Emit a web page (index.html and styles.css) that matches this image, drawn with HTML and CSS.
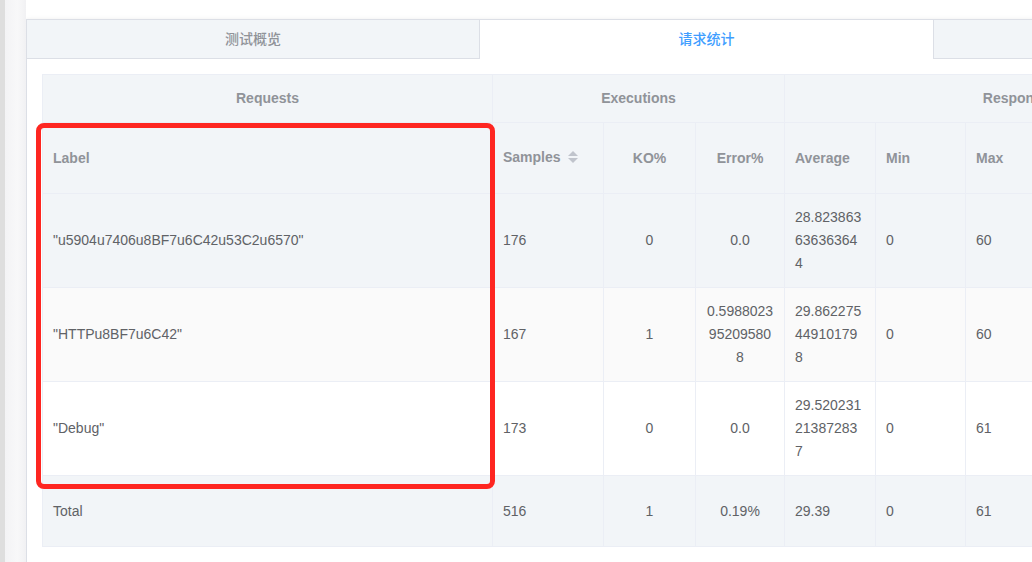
FILE: index.html
```html
<!DOCTYPE html>
<html lang="zh">
<head>
<meta charset="utf-8">
<title>请求统计</title>
<link rel="stylesheet" href="styles.css">
</head>
<body>
<div class="page">
  <div class="gutter"></div>
  <div class="side"></div>
  <div class="main">
    <div class="card">
      <div class="tabs">
        <div class="tab t1">测试概览</div>
        <div class="tab active">请求统计</div>
        <div class="tab t3">错误信息</div>
      </div>
      <div class="pane">
        <table class="stats">
          <colgroup>
            <col class="w-label">
            <col class="w-samples">
            <col class="w-ko">
            <col class="w-err">
            <col class="w-avg">
            <col class="w-90">
            <col class="w-90">
            <col class="w-90">
            <col class="w-90">
            <col class="w-90">
            <col class="w-100">
            <col class="w-100">
            <col class="w-100">
          </colgroup>
          <thead>
            <tr class="group">
              <th><div class="cell">Requests</div></th>
              <th colspan="3"><div class="cell">Executions</div></th>
              <th colspan="6"><div class="cell">Response Times (ms)</div></th>
              <th><div class="cell">Throughput</div></th>
              <th colspan="2"><div class="cell">Network (KB/sec)</div></th>
            </tr>
            <tr class="cols">
              <th><div class="cell">Label</div></th>
              <th><div class="cell">Samples<span class="caret-wrapper"><i class="sort-caret ascending"></i><i class="sort-caret descending"></i></span></div></th>
              <th class="c"><div class="cell">KO%</div></th>
              <th class="c"><div class="cell">Error%</div></th>
              <th><div class="cell">Average</div></th>
              <th><div class="cell">Min</div></th>
              <th><div class="cell">Max</div></th>
              <th><div class="cell">90th pct</div></th>
              <th><div class="cell">95th pct</div></th>
              <th><div class="cell">99th pct</div></th>
              <th><div class="cell">Transactions/s</div></th>
              <th><div class="cell">Received</div></th>
              <th><div class="cell">Sent</div></th>
            </tr>
          </thead>
          <tbody>
            <tr class="row-hl">
              <td><div class="cell">"u5904u7406u8BF7u6C42u53C2u6570"</div></td>
              <td><div class="cell">176</div></td>
              <td class="c"><div class="cell">0</div></td>
              <td class="c"><div class="cell">0.0</div></td>
              <td><div class="cell">28.823863636363644</div></td>
              <td><div class="cell">0</div></td>
              <td><div class="cell">60</div></td>
              <td><div class="cell">43.0</div></td>
              <td><div class="cell">50.0</div></td>
              <td><div class="cell">57.0</div></td>
              <td><div class="cell">2.93822</div></td>
              <td><div class="cell">1.23</div></td>
              <td><div class="cell">0.56</div></td>
            </tr>
            <tr class="row-stripe">
              <td><div class="cell">"HTTPu8BF7u6C42"</div></td>
              <td><div class="cell">167</div></td>
              <td class="c"><div class="cell">1</div></td>
              <td class="c"><div class="cell">0.5988023952095808</div></td>
              <td><div class="cell">29.862275449101798</div></td>
              <td><div class="cell">0</div></td>
              <td><div class="cell">60</div></td>
              <td><div class="cell">44.0</div></td>
              <td><div class="cell">51.0</div></td>
              <td><div class="cell">58.0</div></td>
              <td><div class="cell">2.78797</div></td>
              <td><div class="cell">1.17</div></td>
              <td><div class="cell">0.53</div></td>
            </tr>
            <tr class="row-plain">
              <td><div class="cell">"Debug"</div></td>
              <td><div class="cell">173</div></td>
              <td class="c"><div class="cell">0</div></td>
              <td class="c"><div class="cell">0.0</div></td>
              <td><div class="cell">29.520231213872837</div></td>
              <td><div class="cell">0</div></td>
              <td><div class="cell">61</div></td>
              <td><div class="cell">44.0</div></td>
              <td><div class="cell">50.0</div></td>
              <td><div class="cell">58.0</div></td>
              <td><div class="cell">2.88814</div></td>
              <td><div class="cell">1.21</div></td>
              <td><div class="cell">0.55</div></td>
            </tr>
            <tr class="row-total">
              <td><div class="cell">Total</div></td>
              <td><div class="cell">516</div></td>
              <td class="c"><div class="cell">1</div></td>
              <td class="c"><div class="cell">0.19%</div></td>
              <td><div class="cell">29.39</div></td>
              <td><div class="cell">0</div></td>
              <td><div class="cell">61</div></td>
              <td><div class="cell">44.0</div></td>
              <td><div class="cell">50.0</div></td>
              <td><div class="cell">58.0</div></td>
              <td><div class="cell">8.6133555926544</div></td>
              <td><div class="cell">3.61</div></td>
              <td><div class="cell">1.64</div></td>
            </tr>
          </tbody>
        </table>
      </div>
    </div>
  </div>
  <div class="annot"></div>
</div>
</body>
</html>
```

FILE: styles.css
```css
html, body {
  margin: 0;
  padding: 0;
  height: 100%;
}
body {
  font-family: "Liberation Sans", "Noto Sans CJK SC", sans-serif;
  font-size: 14px;
  color: #606266;
  background: #fff;
  overflow: hidden;
}
.page {
  position: relative;
  display: flex;
  height: 562px;
  overflow: hidden;
}
.gutter {
  flex: 0 0 5px;
  background: #dedede;
}
.side {
  flex: 0 0 21px;
  background: linear-gradient(to right, #f3f3f5, #f8f8f9 60%, #f1f1f3);
}
.main {
  flex: 1 1 auto;
  min-width: 0;
  padding-top: 19px;
  overflow: hidden;
  background: #fff;
}
.card {
  width: 1700px;
  height: 620px;
  background: #fff;
  border: 1px solid #dcdfe6;
  box-shadow: 0 2px 4px rgba(0, 0, 0, .12), 0 0 6px rgba(0, 0, 0, .04);
}
.tabs {
  display: flex;
  height: 38px;
  background: #f2f5f8;
  border-bottom: 1px solid #dcdfe6;
}
.tab {
  height: 38px;
  line-height: 38px;
  text-align: center;
  font-size: 14px;
  font-weight: 500;
  color: #909399;
  box-sizing: border-box;
}
.t1 { flex: 0 0 452px; }
.t3 { flex: 0 0 452px; }
.tab.active {
  flex: 0 0 455px;
  height: 39px;
  background: #fff;
  color: #409eff;
  border-left: 1px solid #dcdfe6;
  border-right: 1px solid #dcdfe6;
}
.pane {
  padding: 15px;
}
.stats {
  table-layout: fixed;
  width: 1584px;
  border-collapse: separate;
  border-spacing: 0;
  border-top: 1px solid #ebeef5;
  border-left: 1px solid #ebeef5;
}
.w-label { width: 450px; }
.w-samples { width: 111px; }
.w-ko { width: 92px; }
.w-err { width: 89px; }
.w-avg { width: 91px; }
.w-90 { width: 90px; }
.w-100 { width: 100px; }
.stats th, .stats td {
  padding: 12px 0;
  border-right: 1px solid #ebeef5;
  border-bottom: 1px solid #ebeef5;
  vertical-align: middle;
  text-align: left;
  overflow: hidden;
}
.cell {
  padding: 0 10px;
  line-height: 23px;
  word-break: break-all;
}
.stats th {
  background: #f2f5f8;
  color: #909399;
  font-weight: bold;
}
.stats .group th { text-align: center; }
.stats .c { text-align: center; }
.row-hl td { background: #f2f5f8; }
.row-stripe td { background: #fafafa; }
.row-plain td { background: #fff; }
.row-total td { background: #f2f5f8; }
.caret-wrapper {
  display: inline-flex;
  flex-direction: column;
  align-items: center;
  height: 34px;
  width: 24px;
  vertical-align: middle;
  position: relative;
}
.sort-caret {
  width: 0;
  height: 0;
  border: 5px solid transparent;
  position: absolute;
  left: 7px;
}
.sort-caret.ascending {
  border-bottom-color: #c0c4cc;
  top: 5px;
}
.sort-caret.descending {
  border-top-color: #c0c4cc;
  bottom: 7px;
}
.annot {
  position: absolute;
  left: 36px;
  top: 123px;
  width: 459px;
  height: 366px;
  box-sizing: border-box;
  border: 5px solid #fe2621;
  border-radius: 8px;
  pointer-events: none;
}
```
